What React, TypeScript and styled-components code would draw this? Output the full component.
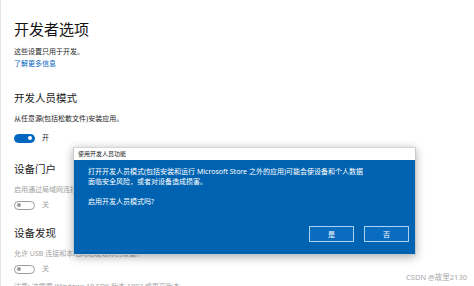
import React from "react";
import styled, { createGlobalStyle } from "styled-components";

const GlobalStyle = createGlobalStyle`
  html, body {
    margin: 0;
    padding: 0;
    background: #ffffff;
    overflow: hidden;
  }
  body {
    font-family: "Noto Sans", "Noto Sans CJK SC", sans-serif;
  }
`;

const Page = styled.div`
  position: relative;
  width: 474px;
  height: 286px;
  overflow: hidden;
  background: #ffffff;
  border-left: 1px solid #e4e4e4;
  box-sizing: border-box;
  padding: 19px 13px 0;
  color: #1a1a1a;
`;

const Title = styled.h1`
  margin: 0;
  font-size: 15px;
  line-height: 20px;
  font-weight: 400;
  color: #111;
`;

const Text = styled.p<{ $muted?: boolean; $top?: number }>`
  margin: ${({ $top }) => $top ?? 0}px 0 0;
  font-size: 7px;
  line-height: 10px;
  white-space: nowrap;
  color: ${({ $muted }) => ($muted ? "#a3a3a3" : "#262626")};
`;

const Link = styled.a`
  display: block;
  margin-top: 2px;
  font-size: 7px;
  line-height: 10px;
  color: #0a67c2;
  text-decoration: none;
`;

const SectionTitle = styled.h2<{ $top: number }>`
  margin: ${({ $top }) => $top}px 0 0;
  font-size: 10.5px;
  line-height: 14px;
  font-weight: 400;
  color: #1a1a1a;
`;

const ToggleRow = styled.div<{ $top: number }>`
  display: flex;
  align-items: center;
  gap: 7px;
  height: 10px;
  margin-top: ${({ $top }) => $top}px;
`;

const Track = styled.span<{ $on?: boolean }>`
  position: relative;
  width: 21px;
  height: 9px;
  border-radius: 5px;
  box-sizing: border-box;
  background: ${({ $on }) => ($on ? "#0067c0" : "#ffffff")};
  border: 1px solid ${({ $on }) => ($on ? "#0067c0" : "#9a9a9a")};
`;

const Knob = styled.span<{ $on?: boolean }>`
  position: absolute;
  top: 1.5px;
  ${({ $on }) => ($on ? "right: 2px;" : "left: 2px;")}
  width: 4px;
  height: 4px;
  border-radius: 50%;
  background: ${({ $on }) => ($on ? "#ffffff" : "#9a9a9a")};
`;

const ToggleLabel = styled.span<{ $muted?: boolean }>`
  font-size: 7px;
  line-height: 10px;
  color: ${({ $muted }) => ($muted ? "#a3a3a3" : "#262626")};
`;

const Dialog = styled.div`
  position: absolute;
  left: 72px;
  top: 147px;
  width: 343px;
  height: 108px;
  display: flex;
  flex-direction: column;
  box-shadow: 0 2px 9px rgba(0, 0, 0, 0.32);
  border: 1px solid #c8c8c8;
  border-top-color: #d6d6d6;
  box-sizing: border-box;
`;

const DialogTitle = styled.div`
  height: 12px;
  flex: none;
  background: #ffffff;
  font-family: "Noto Sans CJK SC", sans-serif;
  font-size: 6px;
  line-height: 12px;
  padding-left: 4px;
  color: #1a1a1a;
`;

const DialogBody = styled.div`
  flex: 1;
  display: flex;
  flex-direction: column;
  background: #0063b1;
  padding: 7px 6px 12px 14px;
  color: #ffffff;
`;

const Message = styled.p<{ $top?: number }>`
  margin: ${({ $top }) => $top ?? 0}px 0 0;
  font-family: "Noto Sans", "Noto Sans CJK SC", sans-serif;
  font-size: 7px;
  line-height: 10px;
  white-space: nowrap;
`;

const Buttons = styled.div`
  margin-top: auto;
  display: flex;
  justify-content: flex-end;
  gap: 10px;
`;

const DialogButton = styled.button`
  width: 45px;
  height: 16px;
  padding: 0;
  box-sizing: border-box;
  background: #0a6cbf;
  border: 1.5px solid #a9d2f2;
  color: #ffffff;
  font-family: "Noto Sans CJK SC", sans-serif;
  font-size: 7px;
  line-height: 12px;
`;

const Watermark = styled.div`
  position: absolute;
  right: 7px;
  bottom: 4px;
  font-family: "Noto Sans", "Noto Sans CJK SC", sans-serif;
  font-size: 7.5px;
  line-height: 10px;
  color: #a8a8a8;
`;

function Toggle({ on, label, top }: { on?: boolean; label: string; top: number }) {
  return (
    <ToggleRow $top={top}>
      <Track $on={on}>
        <Knob $on={on} />
      </Track>
      <ToggleLabel $muted={!on}>{label}</ToggleLabel>
    </ToggleRow>
  );
}

export default function App() {
  return (
    <>
      <GlobalStyle />
      <Page>
        <Title>开发者选项</Title>
        <Text $top={8}>这些设置只用于开发。</Text>
        <Link>了解更多信息</Link>

        <SectionTitle $top={22}>开发人员模式</SectionTitle>
        <Text $top={9}>从任意源(包括松散文件)安装应用。</Text>
        <Toggle on label="开" top={9} />

        <SectionTitle $top={19}>设备门户</SectionTitle>
        <Text $top={9} $muted>启用通过局域网连接进行远程诊断。</Text>
        <Toggle label="关" top={5} />

        <SectionTitle $top={16}>设备发现</SectionTitle>
        <Text $top={9} $muted>允许 USB 连接和本地网络发现你的设备。</Text>
        <Toggle label="关" top={5} />

        <Text $top={8} $muted>注意: 这需要 Windows 10 SDK 版本 1803 或更高版本。</Text>

        <Dialog>
          <DialogTitle>使用开发人员功能</DialogTitle>
          <DialogBody>
            <Message>
              打开开发人员模式(包括安装和运行 Microsoft Store 之外的应用)可能会使设备和个人数据
            </Message>
            <Message>面临安全风险，或者对设备造成损害。</Message>
            <Message $top={10}>启用开发人员模式吗?</Message>
            <Buttons>
              <DialogButton>是</DialogButton>
              <DialogButton>否</DialogButton>
            </Buttons>
          </DialogBody>
        </Dialog>

        <Watermark>CSDN @故里2130</Watermark>
      </Page>
    </>
  );
}
